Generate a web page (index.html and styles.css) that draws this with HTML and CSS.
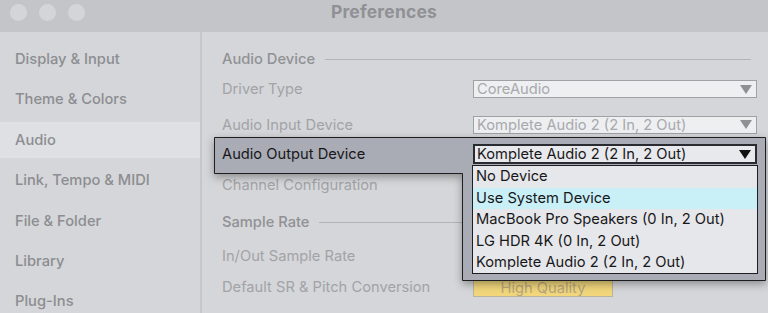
FILE: index.html
```html
<!DOCTYPE html>
<html>
<head>
<meta charset="utf-8">
<link rel="stylesheet" href="styles.css">
</head>
<body>
<div class="window">
  <div class="titlebar">
    <div class="lights"><span class="light"></span><span class="light"></span><span class="light"></span></div>
    <div class="title">Preferences</div>
  </div>
  <div class="content">
    <nav class="sidebar">
      <div class="nav-item">Display &amp; Input</div>
      <div class="nav-item">Theme &amp; Colors</div>
      <div class="nav-item active">Audio</div>
      <div class="nav-item">Link, Tempo &amp; MIDI</div>
      <div class="nav-item">File &amp; Folder</div>
      <div class="nav-item">Library</div>
      <div class="nav-item">Plug-Ins</div>
    </nav>
    <main class="main">
      <div class="section">Audio Device<span class="rule"></span></div>
      <div class="row">
        <span class="label">Driver Type</span>
        <div class="select"><span>CoreAudio</span><span class="arrow"></span></div>
      </div>
      <div class="row row-wide">
        <span class="label">Audio Input Device</span>
        <div class="select"><span>Komplete Audio 2 (2 In, 2 Out)</span><span class="arrow"></span></div>
      </div>
      <div class="row row-focus">
        <span class="label label-focus">Audio Output Device</span>
        <div class="select select-open"><span>Komplete Audio 2 (2 In, 2 Out)</span><span class="arrow arrow-dark"></span></div>
      </div>
      <div class="row row-ch">
        <span class="label">Channel Configuration</span>
      </div>
      <div class="section section-sr">Sample Rate<span class="rule rule-short"></span></div>
      <div class="row row-mid">
        <span class="label">In/Out Sample Rate</span>
      </div>
      <div class="row row-last">
        <span class="label">Default SR &amp; Pitch Conversion</span>
        <div class="hq">High Quality</div>
      </div>
    </main>
  </div>
  <svg class="frame" width="552" height="144" viewBox="0 0 552 144">
    <path d="M0.5 0.5 H551.5 V143.5 H248.5 V36.5 H0.5 Z" fill="#a9abb5" stroke="#1d1d22" stroke-width="1"/>
  </svg>
  <ul class="menu">
    <li>No Device</li>
    <li class="hover">Use System Device</li>
    <li>MacBook Pro Speakers (0 In, 2 Out)</li>
    <li>LG HDR 4K (0 In, 2 Out)</li>
    <li>Komplete Audio 2 (2 In, 2 Out)</li>
  </ul>
</div>
</body>
</html>
```
FILE: styles.css
```css
* { box-sizing: border-box; }
html, body { margin: 0; padding: 0; }
body {
  width: 768px;
  height: 313px;
  overflow: hidden;
  font-family: "Inter", "Open Sans", sans-serif;
  background: #d5d6d9;
}
.window {
  position: relative;
  width: 768px;
  height: 313px;
  display: flex;
  flex-direction: column;
  background: #d5d6d9;
  overflow: hidden;
}
.titlebar {
  flex: 0 0 32px;
  height: 32px;
  background: #c4c5c9;
  position: relative;
  display: flex;
  align-items: center;
  justify-content: center;
}
.lights {
  position: absolute;
  left: 10px;
  top: 4px;
  display: flex;
  gap: 12px;
}
.light {
  width: 17px;
  height: 17px;
  border-radius: 50%;
  background: #d4d5d8;
}
.title {
  font-size: 17.5px;
  font-weight: 700;
  color: #909195;
  margin-top: -9px;
  letter-spacing: 0.2px;
}
.content {
  flex: 1 1 auto;
  min-height: 0;
  display: flex;
}
.sidebar {
  flex: 0 0 202px;
  border-right: 2px solid #c6c7ca;
  padding-top: 9px;
  display: flex;
  flex-direction: column;
  gap: 4.4px;
}
.nav-item {
  flex: 0 0 36px;
  height: 36px;
  line-height: 36px;
  padding-left: 15px;
  font-size: 14.7px;
  font-weight: 500;
  color: #8c8d91;
}
.nav-item.active { background: #dfe0e3; }
.main {
  flex: 1;
  padding: 17px 11px 0 20px;
  display: flex;
  flex-direction: column;
}
.section {
  flex: 0 0 20px;
  height: 20px;
  display: flex;
  align-items: center;
  font-size: 14.7px;
  font-weight: 500;
  color: #909195;
}
.rule {
  flex: 0 0 426px;
  height: 1px;
  background: #b3b4b8;
  margin-left: 10px;
}
.rule-short { flex-basis: 150px; }
.section-sr { margin-top: 17px; }
.row {
  flex: 0 0 20px;
  height: 20px;
  margin-top: 10px;
  display: flex;
  align-items: center;
}
.row-wide { margin-top: 15.5px; }
.row-ch { margin-top: 11px; }
.row-mid { margin-top: 14px; }
.row-last { margin-top: 11px; }
.row-focus { margin-top: 9.5px; position: relative; z-index: 2; }
.label {
  width: 251px;
  flex: 0 0 251px;
  font-size: 14.7px;
  color: #a2a3a7;
}
.label-focus { color: #18181b; }
.select {
  width: 284px;
  height: 18px;
  border: 1px solid #a0a1a5;
  background: #eeeff1;
  display: flex;
  align-items: center;
  justify-content: space-between;
  padding: 0 4px 0 3px;
  font-size: 14.7px;
  color: #a8a9ad;
}
.arrow {
  width: 0;
  height: 0;
  border-left: 6px solid transparent;
  border-right: 6px solid transparent;
  border-top: 9px solid #8f9094;
}
.select-open {
  height: 20px;
  border: 2px solid #2a2b31;
  background: #e8e9ec;
  color: #18181b;
  padding-left: 2px;
}
.arrow-dark { border-top-color: #111; }
.hq {
  width: 140px;
  height: 18px;
  background: #f1d67c;
  border: 1px solid #b9b3a0;
  border-top: 2px solid #e79e1c;
  font-size: 14.7px;
  line-height: 15px;
  text-align: center;
  color: #b6a77c;
  margin-top: 1px;
}
.frame {
  position: absolute;
  left: 214px;
  top: 137px;
  z-index: 1;
  filter: drop-shadow(0 3px 4px rgba(0,0,0,0.35));
}
.menu {
  position: absolute;
  left: 472px;
  top: 165px;
  width: 286px;
  height: 109px;
  margin: 0;
  padding: 0;
  list-style: none;
  background: #e6e7ea;
  border: 1px solid #1d1d22;
  z-index: 3;
}
.menu li {
  height: 21.5px;
  line-height: 21.5px;
  padding-left: 3px;
  font-size: 14.7px;
  color: #18181b;
}
.menu li.hover { background: #c9eff7; }
```
